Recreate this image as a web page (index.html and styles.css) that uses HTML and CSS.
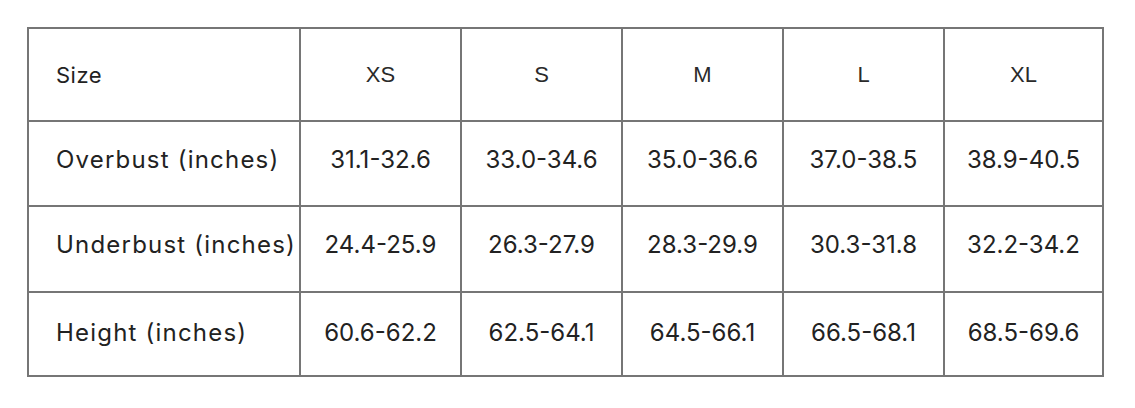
FILE: index.html
```html
<!DOCTYPE html>
<html lang="en">
<head>
<meta charset="utf-8">
<title>Size chart</title>
<link rel="stylesheet" href="styles.css">
</head>
<body>
<div class="chart">
  <div class="grid">
    <div class="cell label size r1">Size</div>
    <div class="cell head">XS</div>
    <div class="cell head">S</div>
    <div class="cell head">M</div>
    <div class="cell head">L</div>
    <div class="cell head">XL</div>

    <div class="cell label r2">Overbust (inches)</div>
    <div class="cell r2">31.1-32.6</div>
    <div class="cell r2">33.0-34.6</div>
    <div class="cell r2">35.0-36.6</div>
    <div class="cell r2">37.0-38.5</div>
    <div class="cell r2">38.9-40.5</div>

    <div class="cell label r3">Underbust (inches)</div>
    <div class="cell r3">24.4-25.9</div>
    <div class="cell r3">26.3-27.9</div>
    <div class="cell r3">28.3-29.9</div>
    <div class="cell r3">30.3-31.8</div>
    <div class="cell r3">32.2-34.2</div>

    <div class="cell label r4">Height (inches)</div>
    <div class="cell r4">60.6-62.2</div>
    <div class="cell r4">62.5-64.1</div>
    <div class="cell r4">64.5-66.1</div>
    <div class="cell r4">66.5-68.1</div>
    <div class="cell r4">68.5-69.6</div>
  </div>
</div>
</body>
</html>
```
FILE: styles.css
```css
body {
  margin: 0;
  background: #ffffff;
}

.chart {
  padding: 27px;
}

.grid {
  display: grid;
  grid-template-columns: 270px 159px 159px 159px 159px 157px;
  grid-template-rows: 91px 83px 84px 82px;
  gap: 2px;
  padding: 2px;
  background: #767676;
  width: max-content;
}

.cell {
  background: #ffffff;
  display: flex;
  align-items: center;
  justify-content: center;
  font-family: Inter, "Noto Sans", sans-serif;
  font-size: 24px;
  color: #222222;
  white-space: nowrap;
}

.cell.label {
  justify-content: flex-start;
  padding-left: 27px;
  letter-spacing: 1.2px;
}

.cell.label.size {
  font-size: 22px;
  letter-spacing: 0.5px;
}

.cell.head {
  font-family: "Liberation Sans", Arial, sans-serif;
  font-size: 22px;
  color: #2a2a2a;
}

.r2 { padding-bottom: 8px; }
.r3 { padding-bottom: 10px; }
.r4 { padding-bottom: 3px; }
```
